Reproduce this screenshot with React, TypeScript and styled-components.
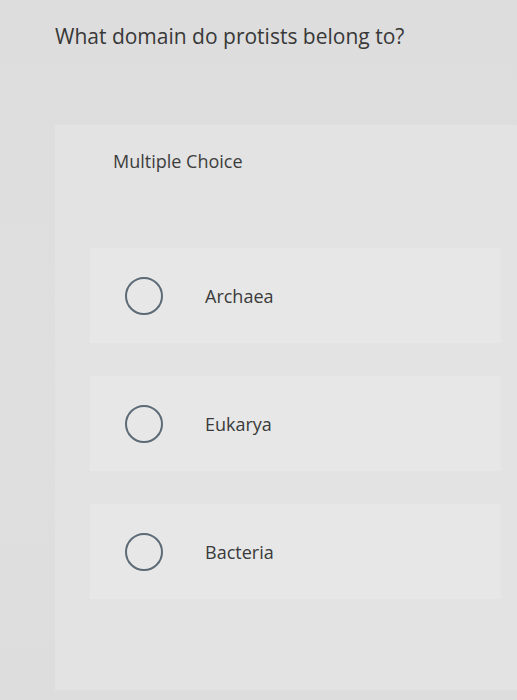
import React from "react";
import styled, { createGlobalStyle } from "styled-components";

const GlobalStyle = createGlobalStyle`
  html, body {
    margin: 0;
    padding: 0;
    background: #dcdcdc;
  }
  body {
    font-family: "Open Sans", "Lato", sans-serif;
    color: #3b3b3b;
  }
`;

const Page = styled.div`
  height: 700px;
  display: flex;
  flex-direction: column;
  padding-left: 55px;
  box-sizing: border-box;
  overflow: hidden;
  background: linear-gradient(180deg, #dddddd 0%, #dfdfdf 60%, #dcdddc 100%);
`;

const Question = styled.h1`
  margin: 22px 0 0;
  font-size: 21px;
  line-height: 28px;
  font-weight: 400;
  color: #383838;
`;

const Panel = styled.section`
  margin-top: 75px;
  height: 565px;
  background: #e2e3e2;
  padding: 25px 16px 0 35px;
  display: flex;
  flex-direction: column;
  box-sizing: border-box;
`;

const Label = styled.div`
  font-size: 18px;
  line-height: 22px;
  color: #3d3d3d;
  margin-left: 23px;
`;

const Options = styled.div`
  display: flex;
  flex-direction: column;
  gap: 33px;
  margin-top: 76px;
`;

const OptionRow = styled.label`
  display: flex;
  align-items: center;
  height: 95px;
  background: #e6e7e6;
  padding-left: 35px;
`;

const Radio = styled.span`
  width: 38px;
  height: 38px;
  border: 2px solid #5b6b77;
  border-radius: 50%;
  box-sizing: border-box;
  flex: none;
`;

const OptionText = styled.span`
  margin-left: 42px;
  font-size: 18px;
  color: #3a3a3a;
`;

const choices = ["Archaea", "Eukarya", "Bacteria"];

const App = () => (
  <>
    <GlobalStyle />
    <Page>
      <Question>What domain do protists belong to?</Question>
      <Panel>
        <Label>Multiple Choice</Label>
        <Options>
          {choices.map((c) => (
            <OptionRow key={c}>
              <Radio />
              <OptionText>{c}</OptionText>
            </OptionRow>
          ))}
        </Options>
      </Panel>
    </Page>
  </>
);

export default App;
